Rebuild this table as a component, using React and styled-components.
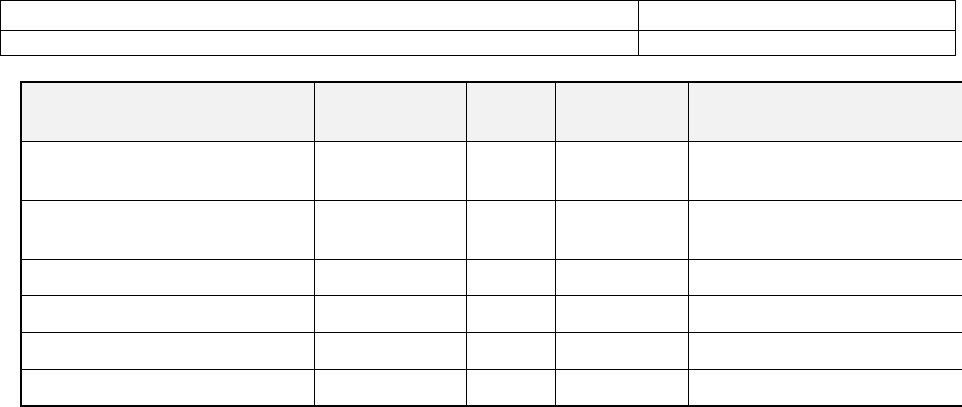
import React from 'react'
import styled, { createGlobalStyle } from 'styled-components'

const GlobalStyle = createGlobalStyle`
    html, body {
        margin: 0;
        padding: 0;
        background: #fff;
        font-family: "Liberation Sans", Arial, sans-serif;
        font-size: 14px;
        color: #000;
    }
`

const Page = styled.div`
    display: flex;
    flex-direction: column;
    align-items: flex-start;
    gap: 25px;
`

const InfoTable = styled.table`
    width: 955px;
    border-collapse: collapse;
    table-layout: fixed;
    td {
        border: 1px solid #000;
        padding: 0 8px;
        box-sizing: border-box;
    }
`

const InfoRow = styled.tr`
    height: ${p => p.h}px;
`

const DataTable = styled.table`
    margin-left: 20px;
    width: 942px;
    border-collapse: collapse;
    table-layout: fixed;
    border: 2px solid #000;
    th, td {
        border: 1px solid #000;
        padding: 0 8px;
        box-sizing: border-box;
        text-align: left;
        font-weight: normal;
    }
    th {
        background-color: #f2f2f2;
    }
`

const Row = styled.tr`
    height: ${p => p.h}px;
`

const infoCols = [638, 317]
const dataCols = [293, 152, 89, 133, 275]
const bodyRows = [59, 59, 36, 37, 37, 37]

export default function App() {
    return (
        <>
            <GlobalStyle />
            <Page>
                <InfoTable>
                    <colgroup>
                        {infoCols.map((w, i) => <col key={i} style={{ width: w }} />)}
                    </colgroup>
                    <tbody>
                        <InfoRow h={30}><td></td><td></td></InfoRow>
                        <InfoRow h={25}><td></td><td></td></InfoRow>
                    </tbody>
                </InfoTable>
                <DataTable>
                    <colgroup>
                        {dataCols.map((w, i) => <col key={i} style={{ width: w }} />)}
                    </colgroup>
                    <thead>
                        <Row h={59}>
                            {dataCols.map((w, i) => <th key={i}></th>)}
                        </Row>
                    </thead>
                    <tbody>
                        {bodyRows.map((h, r) => (
                            <Row h={h} key={r}>
                                {dataCols.map((w, i) => <td key={i}></td>)}
                            </Row>
                        ))}
                    </tbody>
                </DataTable>
            </Page>
        </>
    )
}
